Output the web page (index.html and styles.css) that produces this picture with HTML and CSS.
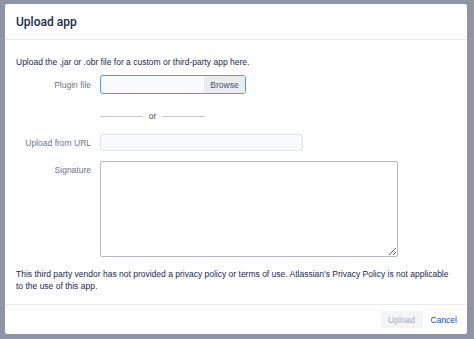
FILE: index.html
```html
<!DOCTYPE html>
<html>
<head>
<meta charset="utf-8">
<link rel="stylesheet" href="styles.css">
</head>
<body>
<div class="dialog">
  <div class="header"><h1 class="title">Upload app</h1></div>
  <div class="body">
    <p class="intro">Upload the .jar or .obr file for a custom or third-party app here.</p>
    <div class="form">
      <label class="label label-mid">Plugin file</label>
      <div class="file-input"><span class="file-path"></span><span class="browse">Browse</span></div>
      <div></div>
      <div class="or"><span class="or-line"></span><span class="or-text">or</span><span class="or-line"></span></div>
      <label class="label label-mid">Upload from URL</label>
      <div class="url-input"></div>
      <label class="label label-top">Signature</label>
      <textarea class="signature"></textarea>
    </div>
    <p class="note">This third party vendor has not provided a privacy policy or terms of use. Atlassian's Privacy Policy is not applicable to the use of this app.</p>
  </div>
  <div class="footer">
    <button class="btn btn-disabled">Upload</button>
    <button class="btn btn-link">Cancel</button>
  </div>
</div>
</body>
</html>
```

FILE: styles.css
```css
html, body {
  margin: 0;
  padding: 0;
  height: 100%;
}
body {
  background: #8d94a6;
  font-family: "Liberation Sans", Arial, sans-serif;
  color: #172b4d;
  overflow: hidden;
}
.dialog {
  margin: 4px 0 0 5px;
  width: 462px;
  height: 330px;
  background: #ffffff;
  border-radius: 2px;
  display: flex;
  flex-direction: column;
  box-sizing: border-box;
}
.header {
  height: 35px;
  border-bottom: 1px solid #ebecf0;
  display: flex;
  align-items: center;
  padding: 0 11px;
}
.title {
  margin: 0;
  font-family: Roboto, "Liberation Sans", sans-serif;
  font-size: 12px;
  font-weight: 500;
  color: #172b4d;
}
.body {
  flex: 1;
  padding: 16px 11px 0 11px;
}
.intro {
  margin: 0;
  font-size: 8.5px;
  line-height: 12px;
  color: #172b4d;
}
.form {
  display: grid;
  grid-template-columns: 75px 1fr;
  column-gap: 9px;
  margin-top: 7px;
  align-items: center;
}
.label {
  font-size: 8.5px;
  color: #6b778c;
  text-align: right;
  line-height: 12px;
}
.label-top {
  align-self: start;
  padding-top: 3px;
}
.file-input {
  width: 146px;
  height: 19px;
  box-sizing: border-box;
  border: 1.5px solid #4c9aff;
  border-radius: 3px;
  display: flex;
  overflow: hidden;
  background: #fafbfc;
}
.file-path {
  flex: 1;
}
.browse {
  width: 41px;
  background: #ebecf0;
  font-size: 8.5px;
  color: #42526e;
  display: flex;
  align-items: center;
  justify-content: center;
}
.or {
  grid-column: 2;
  display: flex;
  align-items: center;
  width: 105px;
  height: 12px;
  margin-top: 16px;
}
.or-line {
  flex: 1;
  height: 1px;
  background: #c1c7d0;
}
.or-text {
  font-size: 8.5px;
  color: #42526e;
  padding: 0 6px;
}
.url-input {
  width: 203px;
  height: 17px;
  box-sizing: border-box;
  border: 1px solid #dfe1e6;
  border-radius: 3px;
  background: #fafbfc;
  margin-top: 12px;
}
.form > .label:nth-of-type(2) {
  margin-top: 12px;
}
.signature {
  width: 298px;
  height: 96px;
  box-sizing: border-box;
  border: 1px solid #b3bac5;
  border-radius: 2px;
  margin: 10px 0 0 0;
  padding: 0;
  display: block;
  resize: both;
}
.form > .label-top {
  margin-top: 10px;
}
.note {
  margin: 11px 0 0 0;
  font-size: 8.5px;
  line-height: 12px;
  color: #172b4d;
}
.footer {
  height: 29px;
  border-top: 1px solid #ebecf0;
  display: flex;
  align-items: center;
  justify-content: flex-end;
  padding: 0 10px 0 11px;
  gap: 8px;
}
.btn {
  font-family: inherit;
  font-size: 8.5px;
  border: none;
  border-radius: 2px;
  height: 17px;
  padding: 0 7px;
  margin: 0;
}
.btn-disabled {
  background: #f4f5f7;
  color: #a5adba;
  width: 42px;
}
.btn-link {
  background: transparent;
  color: #0052cc;
  padding: 0;
}
```
